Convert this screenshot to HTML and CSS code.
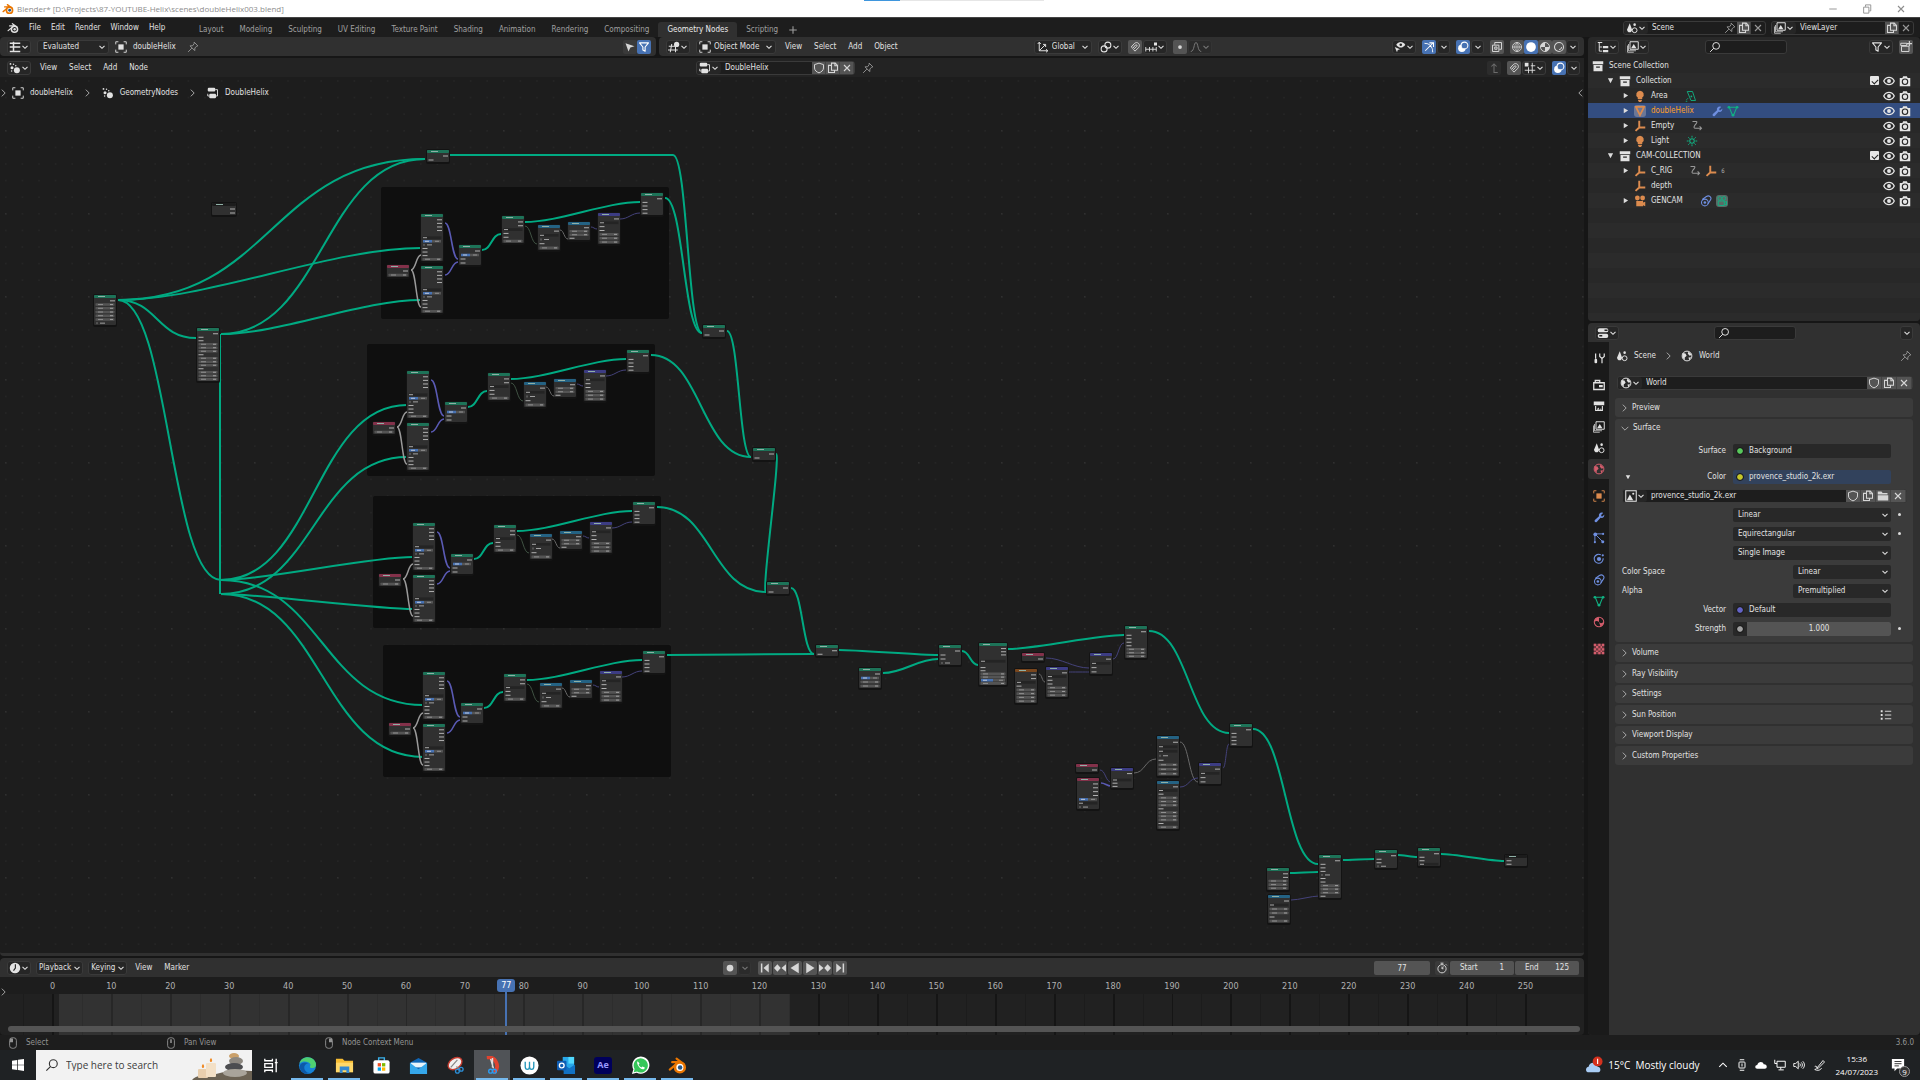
FILE: index.html
```html
<!DOCTYPE html>
<html lang="en">
<head>
    <meta charset="UTF-8">
    <meta name="viewport" content="width=device-width, initial-scale=1.0">
    <title>Blender* [D:\Projects\87-YOUTUBE-Helix\scenes\doubleHelix003.blend]</title>
    <link rel="stylesheet" href="styles.css">
</head>
<body>
    <!-- Icon sprite -->
    <svg class="sprite" aria-hidden="true">
        <symbol id="blender" viewBox="0 0 16 16"><path d="M1.5 11.5 9 5.2H3.5M7.2 2.2l6 4.6" fill="none" stroke="currentColor" stroke-width="1.7" stroke-linecap="round" stroke-linejoin="round"/><circle cx="10" cy="9.6" r="4.1" fill="none" stroke="currentColor" stroke-width="2"/><circle cx="10.2" cy="9.6" r="1.6" fill="currentColor"/></symbol>
        <symbol id="blender-color" viewBox="0 0 16 16"><path d="M1.5 11.5 9 5.2H3.5M7.2 2.2l6 4.6" fill="none" stroke="#ea7600" stroke-width="1.8" stroke-linecap="round" stroke-linejoin="round"/><circle cx="10" cy="9.6" r="4.1" fill="#fff" stroke="#ea7600" stroke-width="2.2"/><circle cx="10.2" cy="9.6" r="1.9" fill="#265787"/></symbol>
        <symbol id="chev" viewBox="0 0 8 8"><path d="M1.5 2.8 4 5.3l2.5-2.5" fill="none" stroke="currentColor" stroke-width="1.1"/></symbol>
        <symbol id="right" viewBox="0 0 8 12"><path d="M2 2l4 4-4 4" fill="none" stroke="currentColor" stroke-width="1.1"/></symbol>
        <symbol id="left" viewBox="0 0 8 12"><path d="M6 2 2 6l4 4" fill="none" stroke="currentColor" stroke-width="1.1"/></symbol>
        <symbol id="down" viewBox="0 0 12 8"><path d="M2 2l4 4 4-4" fill="none" stroke="currentColor" stroke-width="1.1"/></symbol>
        <symbol id="tri-right" viewBox="0 0 8 8"><path d="M2 1v6l5-3z" fill="currentColor"/></symbol>
        <symbol id="tri-down" viewBox="0 0 8 8"><path d="M1 1.5h6L4 7z" fill="currentColor"/></symbol>
        <symbol id="x" viewBox="0 0 16 16"><path d="M4 4l8 8M12 4l-8 8" stroke="currentColor" stroke-width="1.5"/></symbol>
        <symbol id="plus" viewBox="0 0 16 16"><path d="M8 3v10M3 8h10" stroke="currentColor" stroke-width="1.4"/></symbol>
        <symbol id="minus" viewBox="0 0 16 16"><path d="M3 8h10" stroke="currentColor" stroke-width="1.2"/></symbol>
        <symbol id="restore" viewBox="0 0 16 16"><path d="M3.5 5.5h7v8h-7zM6 5V2.500h7v8h-2" fill="none" stroke="currentColor" stroke-width="1.2"/></symbol>
        <symbol id="sheet" viewBox="0 0 16 16"><path d="M1 3h14M1 8h14M1 14h14M6 1v13" fill="none" stroke="currentColor" stroke-width="2"/></symbol>
        <symbol id="geo" viewBox="0 0 16 16"><g fill="currentColor"><circle cx="10.500" cy="11" r="4"/><circle cx="4" cy="7.500" r="2"/><circle cx="2" cy="2.500" r="1.200"/><circle cx="6" cy="3" r="1"/><circle cx="9" cy="5" r="1"/><circle cx="3.500" cy="12" r="1"/></g></symbol>
        <symbol id="object" viewBox="0 0 16 16"><rect x="4.500" y="4.500" width="7" height="7" fill="currentColor"/><path d="M1 4.500V1h3.500M11.500 1H15v3.500M15 11.500V15h-3.500M4.500 15H1v-3.500" fill="none" stroke="currentColor" stroke-width="1.200"/></symbol>
        <symbol id="pin" viewBox="0 0 16 16"><path d="M9.500 1.500l5 5-1.600.4-2.400 2.400-.2 3.500L4 6.500l3.500-.2L9.500 3.500zM6.500 9.500l-5 5" fill="none" stroke="currentColor" stroke-width="1.200" stroke-linejoin="round"/></symbol>
        <symbol id="tree" viewBox="0 0 16 16"><rect x="1" y="1" width="10" height="5" rx="1.500" fill="currentColor"/><rect x="3" y="9" width="9" height="6" rx="1.500" fill="currentColor"/><path d="M11 3.500h3V12h-2M3 12H1V9" fill="none" stroke="currentColor" stroke-width="1.200"/></symbol>
        <symbol id="arrow" viewBox="0 0 16 16"><path d="M2 3l12 4-5.500 1.500L6 14z" fill="currentColor"/></symbol>
        <symbol id="funnel" viewBox="0 0 16 16"><path d="M2 2.500h12L9.500 8v5.500L6.500 12V8z" fill="none" stroke="currentColor" stroke-width="1.500" stroke-linejoin="round"/></symbol>
        <symbol id="view3d" viewBox="0 0 16 16"><path d="M1 7h9M0 12h13M5 4 3 15M10 8v7" fill="none" stroke="currentColor" stroke-width="1.400"/><circle cx="11.500" cy="4.500" r="3.500" fill="currentColor"/></symbol>
        <symbol id="axes" viewBox="0 0 16 16"><path d="M3 2v11h11M3 13l8-8M1 4l2-2.500L5 4M12 11l2.500 2L12 15M8 4.500h3.500V8" fill="none" stroke="currentColor" stroke-width="1.300"/></symbol>
        <symbol id="link" viewBox="0 0 16 16"><circle cx="5.500" cy="10.500" r="4" fill="none" stroke="currentColor" stroke-width="1.400"/><circle cx="10.500" cy="5.500" r="4" fill="none" stroke="currentColor" stroke-width="1.400"/><circle cx="8" cy="8" r="1.300" fill="currentColor"/></symbol>
        <symbol id="magnet" viewBox="0 0 16 16"><path d="M3 8l4-4.500c4-4 9.500 1.500 5.500 5.500L8 13.500 6 11.500l4.300-4.300c1.200-1.400-.5-3-1.800-1.800L5 9.800z" fill="none" stroke="currentColor" stroke-width="1.300"/></symbol>
        <symbol id="increment" viewBox="0 0 16 16"><path d="M1 8v6M15 8v6M1 11h14M6 8v6M10.500 8v6" fill="none" stroke="currentColor" stroke-width="1.200"/><rect x="12" y="2" width="4" height="4" fill="currentColor"/></symbol>
        <symbol id="snapgrid" viewBox="0 0 16 16"><path d="M1 11h14M9 5h6M6 7v8M11 1v14" fill="none" stroke="currentColor" stroke-width="1.200"/><rect x="1" y="1" width="5" height="5" fill="currentColor"/></symbol>
        <symbol id="dot" viewBox="0 0 16 16"><circle cx="8" cy="8" r="2.500" fill="currentColor"/></symbol>
        <symbol id="falloff" viewBox="0 0 16 16"><path d="M1 14C6 14 5 2 8 2s2 12 7 12" fill="none" stroke="currentColor" stroke-width="1.300"/></symbol>
        <symbol id="eyecursor" viewBox="0 0 16 16"><path d="M3 5c3-5 9-5 12 0-3 5-9 5-12 0z" fill="currentColor"/><circle cx="9" cy="5" r="1.700" fill="#222"/><path d="M1 8l7 3-3 1-1 3z" fill="currentColor"/></symbol>
        <symbol id="gizmo" viewBox="0 0 16 16"><path d="M2 3c7 0 11 5 11 12M3 13 13 3M8.500 2.500H14V8" fill="none" stroke="currentColor" stroke-width="1.400"/></symbol>
        <symbol id="overlay" viewBox="0 0 16 16"><circle cx="6.500" cy="9.500" r="5" fill="currentColor"/><circle cx="10" cy="6" r="4.500" fill="#4772b3" stroke="currentColor" stroke-width="1.400"/></symbol>
        <symbol id="xray" viewBox="0 0 16 16"><path d="M2 5.500h8.500V14H2zM5 5V2h9v9h-3M5 8h3v3H5z" fill="none" stroke="currentColor" stroke-width="1.300"/></symbol>
        <symbol id="wire" viewBox="0 0 16 16"><circle cx="8" cy="8" r="6" fill="none" stroke="currentColor" stroke-width="1.200"/><path d="M2 8h12M8 2v12M8 2C4 5 4 11 8 14M8 2c4 3 4 9 0 12" fill="none" stroke="currentColor"/></symbol>
        <symbol id="solid" viewBox="0 0 16 16"><circle cx="8" cy="8" r="6.500" fill="currentColor"/></symbol>
        <symbol id="matprev" viewBox="0 0 16 16"><circle cx="8" cy="8" r="6" fill="none" stroke="currentColor" stroke-width="1.300"/><path d="M8 2v6H2a6 6 0 0 1 6-6zM8 8h6a6 6 0 0 1-6 6z" fill="currentColor"/></symbol>
        <symbol id="rendered" viewBox="0 0 16 16"><circle cx="8" cy="8" r="6" fill="none" stroke="currentColor" stroke-width="1.400"/><path d="M8 11.500A3.500 3.500 0 0 0 11.500 8" fill="none" stroke="currentColor" stroke-width="1.200"/></symbol>
        <symbol id="shield" viewBox="0 0 16 16"><path d="M8 1.500 14 3.500V8c0 3-3 5.500-6 6.500C5 13.500 2 11 2 8V3.500z" fill="none" stroke="currentColor" stroke-width="1.300"/></symbol>
        <symbol id="copy" viewBox="0 0 16 16"><path d="M6 1.500h5L14 4.500V11H6zM10.500 1.500V5H14M5.500 4.500H2v9.500h8v-2.500" fill="none" stroke="currentColor" stroke-width="1.400"/></symbol>
        <symbol id="folder" viewBox="0 0 16 16"><path d="M1 2h5l1.500 2H14v2H1zM1 7h14v7H1z" fill="currentColor"/></symbol>
        <symbol id="image" viewBox="0 0 16 16"><rect x="1" y="1" width="14" height="14" fill="none" stroke="currentColor" stroke-width="1.400"/><path d="M2.500 13.500 6.500 6l4.500 7.500z" fill="currentColor"/><circle cx="11" cy="5" r="1.400" fill="currentColor"/></symbol>
        <symbol id="layers" viewBox="0 0 16 16"><path d="M4 1h11v10H4z" fill="none" stroke="currentColor" stroke-width="1.300"/><path d="M5.500 9.500 9 4l3.500 5.500z" fill="currentColor"/><path d="M2 4v9h10M.7 6v9H9" fill="none" stroke="currentColor"/></symbol>
        <symbol id="scene" viewBox="0 0 16 16"><path d="M5 1.500 8 10c.5 5-7 5-6.500 0z" fill="currentColor"/><circle cx="11.500" cy="11" r="3.200" fill="none" stroke="currentColor" stroke-width="1.300"/><circle cx="11.500" cy="3.500" r="1.700" fill="currentColor"/></symbol>
        <symbol id="outliner" viewBox="0 0 16 16"><path d="M1 2h6M3 2v11.500h4M3 8h4" fill="none" stroke="currentColor" stroke-width="1.300"/><path d="M8 6.500h7v3H8zM8 12h7v3H8z" fill="currentColor"/></symbol>
        <symbol id="search" viewBox="0 0 16 16"><circle cx="9.500" cy="6.500" r="4.500" fill="none" stroke="currentColor" stroke-width="1.300"/><path d="M6.500 9.500 1.500 14.500" stroke="currentColor" stroke-width="1.300"/></symbol>
        <symbol id="newcol" viewBox="0 0 16 16"><path d="M1 3h8v3H1zM2 7h10v7H2z" fill="none" stroke="currentColor" stroke-width="1.300"/><path d="M12.500 0v7M9 3.500h7" stroke="currentColor" stroke-width="1.500"/></symbol>
        <symbol id="collection" viewBox="0 0 16 16"><path d="M1 1.500h14v4H1zM2 6.500h12V15H2z" fill="currentColor"/><path d="M5.500 9.500h5" stroke="#282828" stroke-width="1.600"/></symbol>
        <symbol id="bulb" viewBox="0 0 16 16"><path d="M8 1a5 5 0 0 0-3 9v2h6v-2a5 5 0 0 0-3-9zM5.500 13h5v1.500l-1.500 1.500H7l-1.500-1.500z" fill="currentColor"/></symbol>
        <symbol id="area" viewBox="0 0 16 16"><path d="M3 2h7l4 12H8zM2 13l2-2M1 15h2" fill="none" stroke="currentColor" stroke-width="1.200"/><circle cx="8.500" cy="8.500" r="1.200" fill="currentColor"/></symbol>
        <symbol id="mesh" viewBox="0 0 16 16"><path d="M3 3h10L9 13H7z" fill="none" stroke="currentColor" stroke-width="1.400"/><circle cx="2.500" cy="3" r="1.800" fill="currentColor"/><circle cx="13.500" cy="3" r="1.800" fill="currentColor"/><circle cx="8" cy="13.500" r="1.800" fill="currentColor"/></symbol>
        <symbol id="meshobj" viewBox="0 0 16 16"><path d="M2.500 2.500h11L8 13.500z" fill="none" stroke="currentColor" stroke-width="2.400"/></symbol>
        <symbol id="wrench" viewBox="0 0 16 16"><path d="M13.500 2.500l-2.500 2.500v2h2l2-2.500c.7 3-2 5.500-5 4.500l-5 5.500c-1.500 1.500-4-.5-2.500-2.500l5.500-5c-1-3 2-6 5.500-4.500z" fill="currentColor"/></symbol>
        <symbol id="empty" viewBox="0 0 16 16"><path d="M7 1v9h8M7 10l-5 4.500" fill="none" stroke="currentColor" stroke-width="2.600"/></symbol>
        <symbol id="anim" viewBox="0 0 16 16"><path d="M2 2h5c2 0 0 3-1.500 4.500C3 10 4 11 6 11h8M11.500 8.500 14 11l-2.500 2.500" fill="none" stroke="currentColor" stroke-width="1.400"/></symbol>
        <symbol id="sun" viewBox="0 0 16 16"><circle cx="8" cy="8" r="3" fill="none" stroke="currentColor" stroke-width="1.400"/><path d="M8 1v2.500M8 12.500V15M1 8h2.500M12.500 8H15M3 3l1.800 1.800M11.200 11.200 13 13M13 3l-1.800 1.800M4.800 11.200 3 13" stroke="currentColor" stroke-width="1.300"/></symbol>
        <symbol id="camera" viewBox="0 0 16 16"><circle cx="4.500" cy="4" r="3.200" fill="currentColor"/><circle cx="11.500" cy="4" r="3.200" fill="currentColor"/><path d="M3 8h9v2l3-1v6l-3-1.500V15H3z" fill="currentColor"/></symbol>
        <symbol id="constraint" viewBox="0 0 16 16"><circle cx="6.500" cy="10" r="4.500" fill="none" stroke="currentColor" stroke-width="1.400"/><circle cx="6.500" cy="10" r="1.700" fill="currentColor"/><path d="M3 6 8.500 2c4-2.500 7.500 1.500 5.500 4.500L10.500 12" fill="none" stroke="currentColor" stroke-width="1.400"/></symbol>
        <symbol id="camdata" viewBox="0 0 16 16"><path d="M3 8h8v6H3zM11 10l3-1.500v5L11 12" fill="none" stroke="currentColor" stroke-width="1.200"/><circle cx="5" cy="4.500" r="2.500" fill="none" stroke="currentColor" stroke-width="1.200"/><circle cx="10.500" cy="4.500" r="2.500" fill="none" stroke="currentColor" stroke-width="1.200"/></symbol>
        <symbol id="eye" viewBox="0 0 16 16"><path d="M1 8c3-6.500 11-6.500 14 0-3 6.500-11 6.500-14 0z" fill="none" stroke="currentColor" stroke-width="1.700"/><circle cx="8" cy="8" r="2.600" fill="currentColor"/></symbol>
        <symbol id="photo" viewBox="0 0 16 16"><path d="M1 4h3.500l1-2.500h5l1 2.500H15v11H1z" fill="currentColor"/><circle cx="8" cy="9" r="3.600" fill="none" stroke="#282828" stroke-width="1.500"/></symbol>
        <symbol id="props" viewBox="0 0 16 16"><rect x="1" y="1.500" width="14" height="5.500" rx="2.500" fill="currentColor"/><rect x="1" y="9" width="14" height="5.500" rx="2.500" fill="currentColor"/><path d="M10 4.200h4M3 11.800h4" stroke="#222" stroke-width="2"/></symbol>
        <symbol id="tool" viewBox="0 0 16 16"><path d="M3.500 2v7M12 9v6" stroke="currentColor" stroke-width="1.600"/><rect x="2" y="9" width="3.500" height="6" rx="1.500" fill="currentColor"/><path d="M9 2v4l3 2.500L15 6V2" fill="none" stroke="currentColor" stroke-width="1.600"/></symbol>
        <symbol id="render" viewBox="0 0 16 16"><path d="M1 5h14v9H1zM3 4.500V2h6v2.500" fill="none" stroke="currentColor" stroke-width="1.700"/><path d="M8 9.500h5" stroke="currentColor" stroke-width="3"/></symbol>
        <symbol id="output" viewBox="0 0 16 16"><path d="M1 2h14v5H1z" fill="currentColor"/><path d="M3.500 8v6h9V8" fill="none" stroke="currentColor" stroke-width="1.500"/><path d="M5 13l2-3 2 3 1.500-2 1 2z" fill="currentColor"/></symbol>
        <symbol id="world" viewBox="0 0 16 16"><circle cx="8" cy="8" r="6.500" fill="none" stroke="currentColor" stroke-width="1.300"/><path d="M2 4l4 .5 1.500 3L5 10v3.500L2 10zM10 2l4 3.500-2 2.500-3-3zM10 10l3.500-.5L11 14z" fill="currentColor"/></symbol>
        <symbol id="particles" viewBox="0 0 16 16"><path d="M3 3l10 10M4 2.500h9M2.500 4v9" stroke="currentColor" stroke-width="1.200"/><circle cx="3" cy="3" r="2.500" fill="currentColor"/><circle cx="13.500" cy="2.500" r="1.400" fill="currentColor"/><circle cx="13" cy="13" r="2" fill="currentColor"/><circle cx="2.500" cy="13.500" r="1.400" fill="currentColor"/></symbol>
        <symbol id="physics" viewBox="0 0 16 16"><path d="M10.500 2.500A6 6 0 1 0 13.500 7" fill="none" stroke="currentColor" stroke-width="1.500"/><circle cx="8" cy="8" r="2.800" fill="currentColor"/><circle cx="13" cy="3" r="1.500" fill="currentColor"/></symbol>
        <symbol id="material" viewBox="0 0 16 16"><circle cx="8" cy="8" r="6.300" fill="none" stroke="currentColor" stroke-width="1.400"/><path d="M8 8V1.700A6.300 6.300 0 0 0 2 8c2-2 4-1.500 6 0zM8 8c1.500 2 4 2 6 0a6.300 6.300 0 0 1-4 6z" fill="currentColor"/></symbol>
        <symbol id="texture" viewBox="0 0 16 16"><path d="M1 1h14v14H1z" fill="currentColor" opacity=".45"/><path d="M1 1h3v3H1zM7 1h3v3H7zM12 1h3v3h-3zM4 4h3v3H4zM10 4h2v3h-2zM1 7h3v3H1zM7 7h3v3H7zM12 7h3v3h-3zM4 10h3v2H4zM10 10h2v2h-2zM1 12h3v3H1zM7 12h3v3H7zM12 12h3v3h-3z" fill="currentColor"/></symbol>
        <symbol id="presets" viewBox="0 0 16 16"><path d="M1 3h2.500M1 8h2.500M1 13h2.500" stroke="currentColor" stroke-width="2.500"/><path d="M6.500 3H15M6.500 8H15M6.500 13H15" stroke="currentColor" stroke-width="1.200"/></symbol>
        <symbol id="clock" viewBox="0 0 16 16"><circle cx="8" cy="8" r="7" fill="currentColor"/><path d="M8.500 3v5l-2.500 3.500" fill="none" stroke="#222" stroke-width="1.500"/></symbol>
        <symbol id="stopwatch" viewBox="0 0 16 16"><circle cx="8" cy="9" r="5.500" fill="none" stroke="currentColor" stroke-width="1.300"/><path d="M8 9 10 6M6 1.500h4M8 1.500v2M13 3l1.500 1.500M8 6v3h2" fill="none" stroke="currentColor" stroke-width="1.200"/></symbol>
        <symbol id="record" viewBox="0 0 16 16"><circle cx="8" cy="8" r="4.500" fill="currentColor"/></symbol>
        <symbol id="first" viewBox="0 0 16 16"><path d="M2.500 2h2v12h-2zM13 2v12L6 8z" fill="currentColor"/></symbol>
        <symbol id="prevkey" viewBox="0 0 16 16"><path d="M0 8l4.500-5L9 8l-4.500 5zM16 3v10l-6-5z" fill="currentColor"/></symbol>
        <symbol id="playback" viewBox="0 0 16 16"><path d="M13 1v14L2 8z" fill="currentColor"/></symbol>
        <symbol id="play" viewBox="0 0 16 16"><path d="M3 1v14l11-7z" fill="currentColor"/></symbol>
        <symbol id="nextkey" viewBox="0 0 16 16"><path d="M16 8l-4.500-5L7 8l4.500 5zM0 3v10l6-5z" fill="currentColor"/></symbol>
        <symbol id="last" viewBox="0 0 16 16"><path d="M13.500 2h-2v12h2zM3 2v12l7-6z" fill="currentColor"/></symbol>
        <symbol id="up" viewBox="0 0 16 16"><path d="M13 14H8V3M4.500 6 8 2.500 11.500 6" fill="none" stroke="currentColor" stroke-width="1.400"/></symbol>
        <symbol id="mouse-l" viewBox="0 0 16 16"><rect x="3.500" y="1" width="9" height="14" rx="3.500" fill="none" stroke="currentColor" stroke-width="1.200"/><path d="M4 2h4v5H4z" fill="currentColor"/></symbol>
        <symbol id="mouse-m" viewBox="0 0 16 16"><rect x="3.500" y="1" width="9" height="14" rx="3.500" fill="none" stroke="currentColor" stroke-width="1.200"/><path d="M7 3h2v5H7z" fill="currentColor"/></symbol>
        <symbol id="mouse-r" viewBox="0 0 16 16"><rect x="3.500" y="1" width="9" height="14" rx="3.500" fill="none" stroke="currentColor" stroke-width="1.200"/><path d="M8 2h4v5H8z" fill="currentColor"/></symbol>
    </svg>

    <div class="titlebar">
        <svg class="icon"><use href="#blender-color"/></svg>
        <span class="title">Blender* [D:\Projects\87-YOUTUBE-Helix\scenes\doubleHelix003.blend]</span>
        <span class="share-progress"></span>
        <div class="window-buttons">
            <button aria-label="Minimize"><svg class="icon"><use href="#minus"/></svg></button>
            <button aria-label="Restore"><svg class="icon"><use href="#restore"/></svg></button>
            <button aria-label="Close"><svg class="icon"><use href="#x"/></svg></button>
        </div>
    </div>

    <header class="topbar">
        <nav class="menus">
            <button aria-label="Blender"><svg class="icon"><use href="#blender"/></svg></button>
            <button>File</button><button>Edit</button><button>Render</button><button>Window</button><button>Help</button>
        </nav>
        <nav class="workspaces">
            <button>Layout</button><button>Modeling</button><button>Sculpting</button><button>UV Editing</button><button>Texture Paint</button><button>Shading</button><button>Animation</button><button>Rendering</button><button>Compositing</button><button class="active">Geometry Nodes</button><button>Scripting</button><button class="add" aria-label="Add workspace"><svg class="icon"><use href="#plus"/></svg></button>
        </nav>
        <div class="datablock scene-block">
            <button class="drop" aria-label="Browse scene"><svg class="icon"><use href="#scene"/></svg><svg class="chev"><use href="#chev"/></svg></button>
            <input type="text" value="Scene" aria-label="Scene name">
            <button class="flat dim" aria-label="Pin scene"><svg class="icon"><use href="#pin"/></svg></button>
            <button class="tile" aria-label="New scene"><svg class="icon"><use href="#copy"/></svg></button>
            <button class="flat dim" aria-label="Delete scene"><svg class="icon"><use href="#x"/></svg></button>
        </div>
        <div class="datablock scene-block">
            <button class="drop" aria-label="Browse view layer"><svg class="icon"><use href="#layers"/></svg><svg class="chev"><use href="#chev"/></svg></button>
            <input type="text" value="ViewLayer" aria-label="View layer name">
            <button class="tile" aria-label="New view layer"><svg class="icon"><use href="#copy"/></svg></button>
            <button class="flat dim" aria-label="Delete view layer"><svg class="icon"><use href="#x"/></svg></button>
        </div>
    </header>

    <main class="workspace">
        <div class="left-side">
            <div class="top-editors">
                <div class="bar sheet-bar">
                    <button class="drop" aria-label="Editor type: Spreadsheet"><svg class="icon"><use href="#sheet"/></svg><svg class="chev"><use href="#chev"/></svg></button>
                    <span class="select eval"><select aria-label="Object evaluation state"><option>Evaluated</option></select><svg class="chev"><use href="#chev"/></svg></span>
                    <span class="crumb"><svg class="icon"><use href="#object"/></svg>doubleHelix</span>
                    <button class="flat dim pin" aria-label="Pin"><svg class="icon"><use href="#pin"/></svg></button>
                    <span class="space"></span>
                    <button class="tile soft" aria-label="Selected only"><svg class="icon"><use href="#arrow"/></svg></button>
                    <button class="tile blue" aria-label="Filter"><svg class="icon"><use href="#funnel"/></svg></button>
                </div>
                <div class="bar view-bar">
                    <button class="drop" aria-label="Editor type: 3D Viewport"><svg class="icon"><use href="#view3d"/></svg><svg class="chev"><use href="#chev"/></svg></button>
                    <span class="select mode"><svg class="icon"><use href="#object"/></svg><select aria-label="Interaction mode"><option>Object Mode</option></select><svg class="chev"><use href="#chev"/></svg></span>
                    <nav class="menus"><button>View</button><button>Select</button><button>Add</button><button>Object</button></nav>
                    <span class="space"></span>
                    <span class="select orient"><svg class="icon"><use href="#axes"/></svg><select aria-label="Transform orientation"><option>Global</option></select><svg class="chev"><use href="#chev"/></svg></span>
                    <button class="drop" aria-label="Pivot point"><svg class="icon"><use href="#link"/></svg><svg class="chev"><use href="#chev"/></svg></button>
                    <span class="joined"><button class="tile" aria-label="Snap"><svg class="icon"><use href="#magnet"/></svg></button><button class="drop" aria-label="Snap to"><svg class="icon"><use href="#increment"/></svg><svg class="chev"><use href="#chev"/></svg></button></span>
                    <span class="joined"><button class="tile" aria-label="Proportional editing"><svg class="icon"><use href="#dot"/></svg></button><button class="drop faded" aria-label="Falloff"><svg class="icon"><use href="#falloff"/></svg><svg class="chev"><use href="#chev"/></svg></button></span>
                    <span class="space wide"></span>
                    <button class="drop" aria-label="Object types visibility"><svg class="icon"><use href="#eyecursor"/></svg><svg class="chev"><use href="#chev"/></svg></button>
                    <span class="joined"><button class="tile blue" aria-label="Gizmos"><svg class="icon"><use href="#gizmo"/></svg></button><button class="drop only" aria-label="Gizmo options"><svg class="chev"><use href="#chev"/></svg></button></span>
                    <span class="joined"><button class="tile blue" aria-label="Overlays"><svg class="icon"><use href="#overlay"/></svg></button><button class="drop only" aria-label="Overlay options"><svg class="chev"><use href="#chev"/></svg></button></span>
                    <button class="tile" aria-label="X-Ray"><svg class="icon"><use href="#xray"/></svg></button>
                    <span class="joined tight"><button class="tile" aria-label="Wireframe"><svg class="icon"><use href="#wire"/></svg></button><button class="tile blue" aria-label="Solid"><svg class="icon"><use href="#solid"/></svg></button><button class="tile" aria-label="Material preview"><svg class="icon"><use href="#matprev"/></svg></button><button class="tile" aria-label="Rendered"><svg class="icon"><use href="#rendered"/></svg></button><button class="drop only" aria-label="Shading options"><svg class="chev"><use href="#chev"/></svg></button></span>
                </div>
            </div>

            <section class="node-editor">
                <div class="node-bar">
                    <div class="node-left">
                        <button class="drop" aria-label="Editor type: Geometry Nodes"><svg class="icon"><use href="#geo"/></svg><svg class="chev"><use href="#chev"/></svg></button>
                        <nav class="menus"><button>View</button><button>Select</button><button>Add</button><button>Node</button></nav>
                    </div>
                    <div class="node-mid">
                        <div class="datablock">
                            <button class="drop" aria-label="Browse node tree"><svg class="icon"><use href="#tree"/></svg><svg class="chev"><use href="#chev"/></svg></button>
                            <input type="text" value="DoubleHelix" aria-label="Node tree name">
                            <button class="tile" aria-label="Fake user"><svg class="icon"><use href="#shield"/></svg></button>
                            <button class="tile" aria-label="New node tree"><svg class="icon"><use href="#copy"/></svg></button>
                            <button class="tile" aria-label="Unlink"><svg class="icon"><use href="#x"/></svg></button>
                        </div>
                        <button class="flat dim" aria-label="Pin"><svg class="icon"><use href="#pin"/></svg></button>
                    </div>
                    <div class="node-right">
                        <button class="tile soft faded" aria-label="Parent node tree"><svg class="icon"><use href="#up"/></svg></button>
                        <span class="joined"><button class="tile" aria-label="Snap"><svg class="icon"><use href="#magnet"/></svg></button><button class="drop" aria-label="Snap to grid"><svg class="icon"><use href="#snapgrid"/></svg><svg class="chev"><use href="#chev"/></svg></button></span>
                        <span class="joined"><button class="tile blue" aria-label="Overlays"><svg class="icon"><use href="#overlay"/></svg></button><button class="drop only" aria-label="Overlay options"><svg class="chev"><use href="#chev"/></svg></button></span>
                    </div>
                </div>
                <div class="canvas">
                    <svg id="node-canvas" role="img" aria-label="DoubleHelix node tree"></svg>
                    <div class="path">
                        <svg class="arrow"><use href="#right"/></svg>
                        <span class="crumb"><svg class="icon"><use href="#object"/></svg>doubleHelix</span>
                        <svg class="arrow"><use href="#right"/></svg>
                        <span class="crumb"><svg class="icon"><use href="#geo"/></svg>GeometryNodes</span>
                        <svg class="arrow"><use href="#right"/></svg>
                        <span class="crumb"><svg class="icon"><use href="#tree"/></svg>DoubleHelix</span>
                        <svg class="arrow end"><use href="#left"/></svg>
                    </div>
                </div>
            </section>

            <section class="timeline">
                <div class="bar time-bar">
                    <div class="time-left">
                        <button class="drop" aria-label="Editor type: Timeline"><svg class="icon"><use href="#clock"/></svg><svg class="chev"><use href="#chev"/></svg></button>
                        <button class="drop text">Playback<svg class="chev"><use href="#chev"/></svg></button>
                        <button class="drop text">Keying<svg class="chev"><use href="#chev"/></svg></button>
                        <nav class="menus"><button>View</button><button>Marker</button></nav>
                    </div>
                    <div class="time-mid">
                        <span class="joined"><button class="tile" aria-label="Auto keying"><svg class="icon"><use href="#record"/></svg></button><button class="drop only faded" aria-label="Auto keying options"><svg class="chev"><use href="#chev"/></svg></button></span>
                        <span class="joined transport"><button class="tile" aria-label="First frame"><svg class="icon"><use href="#first"/></svg></button><button class="tile" aria-label="Previous keyframe"><svg class="icon"><use href="#prevkey"/></svg></button><button class="tile" aria-label="Play reversed"><svg class="icon"><use href="#playback"/></svg></button><button class="tile" aria-label="Play"><svg class="icon"><use href="#play"/></svg></button><button class="tile" aria-label="Next keyframe"><svg class="icon"><use href="#nextkey"/></svg></button><button class="tile" aria-label="Last frame"><svg class="icon"><use href="#last"/></svg></button></span>
                    </div>
                    <div class="time-right">
                        <input class="number frame" type="text" value="77" aria-label="Current frame">
                        <span class="joined">
                            <button class="tile soft" aria-label="Use preview range"><svg class="icon"><use href="#stopwatch"/></svg></button>
                            <label class="number">Start<input type="text" value="1"></label>
                            <label class="number">End<input type="text" value="125"></label>
                        </span>
                    </div>
                </div>
                <div class="tracks">
                    <div class="ruler" id="ruler"></div>
                    <div class="grid" id="grid"></div>
                    <div class="range"></div>
                    <div class="playhead"><span>77</span></div>
                    <div class="hscroll"></div>
                    <svg class="side-arrow"><use href="#right"/></svg>
                </div>
            </section>
        </div>

        <aside class="right-side">
            <section class="outliner">
                <div class="panel-bar">
                    <button class="drop" aria-label="Editor type: Outliner"><svg class="icon"><use href="#outliner"/></svg><svg class="chev"><use href="#chev"/></svg></button>
                    <button class="drop" aria-label="Display mode"><svg class="icon"><use href="#layers"/></svg><svg class="chev"><use href="#chev"/></svg></button>
                    <label class="search"><svg class="icon"><use href="#search"/></svg><input type="text" aria-label="Search outliner"></label>
                    <button class="drop last" aria-label="Filter"><svg class="icon"><use href="#funnel"/></svg><svg class="chev"><use href="#chev"/></svg></button>
                    <button class="tile" aria-label="New collection"><svg class="icon"><use href="#newcol"/></svg></button>
                </div>
                <ul class="rows" id="outliner-rows"></ul>
            </section>

            <section class="properties">
                <div class="panel-bar">
                    <button class="drop" aria-label="Editor type: Properties"><svg class="icon"><use href="#props"/></svg><svg class="chev"><use href="#chev"/></svg></button>
                    <label class="search"><svg class="icon"><use href="#search"/></svg><input type="text" aria-label="Search properties"></label>
                    <button class="drop only last" aria-label="Options"><svg class="chev"><use href="#chev"/></svg></button>
                </div>
                <div class="props-body">
                    <nav class="tabs">
                        <button aria-label="Tool"><svg class="icon"><use href="#tool"/></svg></button>
                        <button class="group" aria-label="Render"><svg class="icon"><use href="#render"/></svg></button>
                        <button aria-label="Output"><svg class="icon"><use href="#output"/></svg></button>
                        <button aria-label="View Layer"><svg class="icon"><use href="#layers"/></svg></button>
                        <button aria-label="Scene"><svg class="icon"><use href="#scene"/></svg></button>
                        <button class="red active" aria-label="World"><svg class="icon"><use href="#world"/></svg></button>
                        <button class="group orange" aria-label="Object"><svg class="icon"><use href="#object"/></svg></button>
                        <button class="azure" aria-label="Modifiers"><svg class="icon"><use href="#wrench"/></svg></button>
                        <button class="azure" aria-label="Particles"><svg class="icon"><use href="#particles"/></svg></button>
                        <button class="azure" aria-label="Physics"><svg class="icon"><use href="#physics"/></svg></button>
                        <button class="azure" aria-label="Constraints"><svg class="icon"><use href="#constraint"/></svg></button>
                        <button class="green" aria-label="Data"><svg class="icon"><use href="#mesh"/></svg></button>
                        <button class="red" aria-label="Material"><svg class="icon"><use href="#material"/></svg></button>
                        <button class="group red" aria-label="Texture"><svg class="icon"><use href="#texture"/></svg></button>
                    </nav>
                    <div class="props-main">
                        <div class="context">
                            <span class="crumb"><svg class="icon"><use href="#scene"/></svg>Scene</span>
                            <svg class="arrow"><use href="#right"/></svg>
                            <span class="crumb"><svg class="icon"><use href="#world"/></svg>World</span>
                            <button class="flat dim last" aria-label="Pin"><svg class="icon"><use href="#pin"/></svg></button>
                        </div>
                        <div class="datablock world-block">
                            <button class="drop" aria-label="Browse world"><svg class="icon"><use href="#world"/></svg><svg class="chev"><use href="#chev"/></svg></button>
                            <input type="text" value="World" aria-label="World name">
                            <button class="tile" aria-label="Fake user"><svg class="icon"><use href="#shield"/></svg></button>
                            <button class="tile" aria-label="New world"><svg class="icon"><use href="#copy"/></svg></button>
                            <button class="tile" aria-label="Unlink"><svg class="icon"><use href="#x"/></svg></button>
                        </div>

                        <div class="panels">
                            <div class="panel"><button class="panel-head"><svg class="arrow"><use href="#right"/></svg>Preview<i class="grip"></i></button></div>
                            <div class="panel open">
                                <button class="panel-head"><svg class="arrow-down"><use href="#down"/></svg>Surface<i class="grip"></i></button>
                                <div class="panel-body">
                                    <div class="prop top-gap"><span class="name">Surface</span><button class="socket-field"><i class="socket lime"></i>Background</button></div>
                                    <div class="prop color-row"><svg class="expander"><use href="#tri-down"/></svg><span class="name">Color</span><button class="socket-field linked"><i class="socket yellow"></i>provence_studio_2k.exr</button></div>
                                    <div class="datablock image-block">
                                        <button class="drop" aria-label="Browse image"><svg class="icon"><use href="#image"/></svg><svg class="chev"><use href="#chev"/></svg></button>
                                        <input type="text" value="provence_studio_2k.exr" aria-label="Image name">
                                        <button class="tile" aria-label="Fake user"><svg class="icon"><use href="#shield"/></svg></button>
                                        <button class="tile" aria-label="New image"><svg class="icon"><use href="#copy"/></svg></button>
                                        <button class="tile" aria-label="Open image"><svg class="icon"><use href="#folder"/></svg></button>
                                        <button class="tile" aria-label="Unlink"><svg class="icon"><use href="#x"/></svg></button>
                                    </div>
                                    <div class="prop animated"><span class="select"><select aria-label="Interpolation"><option>Linear</option></select><svg class="chev"><use href="#chev"/></svg></span></div>
                                    <div class="prop animated"><span class="select"><select aria-label="Projection"><option>Equirectangular</option></select><svg class="chev"><use href="#chev"/></svg></span></div>
                                    <div class="prop"><span class="select"><select aria-label="Source"><option>Single Image</option></select><svg class="chev"><use href="#chev"/></svg></span></div>
                                    <div class="prop narrow"><label for="space">Color Space</label><span class="select"><select id="space"><option>Linear</option></select><svg class="chev"><use href="#chev"/></svg></span></div>
                                    <div class="prop narrow"><label for="alpha">Alpha</label><span class="select"><select id="alpha"><option>Premultiplied</option></select><svg class="chev"><use href="#chev"/></svg></span></div>
                                    <div class="prop"><span class="name">Vector</span><button class="socket-field"><i class="socket violet"></i>Default</button></div>
                                    <div class="prop animated"><label class="name" for="strength">Strength</label><span class="strength"><i class="socket grey"></i><input id="strength" type="text" value="1.000"></span></div>
                                </div>
                            </div>
                            <div class="panel"><button class="panel-head"><svg class="arrow"><use href="#right"/></svg>Volume<i class="grip"></i></button></div>
                            <div class="panel"><button class="panel-head"><svg class="arrow"><use href="#right"/></svg>Ray Visibility<i class="grip"></i></button></div>
                            <div class="panel"><button class="panel-head"><svg class="arrow"><use href="#right"/></svg>Settings<i class="grip"></i></button></div>
                            <div class="panel"><button class="panel-head"><svg class="arrow"><use href="#right"/></svg>Sun Position<svg class="icon presets"><use href="#presets"/></svg><i class="grip"></i></button></div>
                            <div class="panel"><button class="panel-head"><svg class="arrow"><use href="#right"/></svg>Viewport Display<i class="grip"></i></button></div>
                            <div class="panel"><button class="panel-head"><svg class="arrow"><use href="#right"/></svg>Custom Properties<i class="grip"></i></button></div>
                        </div>
                    </div>
                </div>
            </section>
        </aside>
    </main>

    <footer class="statusbar">
        <span><svg class="icon"><use href="#mouse-l"/></svg>Select</span>
        <span><svg class="icon"><use href="#mouse-m"/></svg>Pan View</span>
        <span><svg class="icon"><use href="#mouse-r"/></svg>Node Context Menu</span>
        <span class="version">3.6.0</span>
    </footer>

    <div class="taskbar">
        <button class="start" aria-label="Start"><svg viewBox="0 0 16 16"><path d="M0 2.200 7 1.200v6.400H0zM8 1l8-1v7.600H8zM0 8.400h7v6.400l-7-1zM8 8.400h8V16l-8-1.200z" fill="#fff"/></svg></button>
        <label class="task-search">
            <svg class="glass"><use href="#search"/></svg>
            <input type="text" placeholder="Type here to search" aria-label="Type here to search">
            <svg class="stones" viewBox="0 0 60 30">
                <path d="M0 30c4-5 14-6 24-6 12-4 24-4 36-3v9z" fill="#6b6253"/>
                <rect x="6" y="19" width="10" height="9" rx="1" fill="#e9cfae"/><rect x="14" y="13" width="10" height="14" rx="1" fill="#f3e0c6"/>
                <path d="M11 14c2 2 1 4 0 4s-2-2 0-4zM19 8c2 2 1 4 0 4s-2-2 0-4z" fill="#f08a24"/>
                <ellipse cx="42" cy="6" rx="5" ry="3" fill="#caa06a"/><ellipse cx="44" cy="11" rx="7" ry="4" fill="#8d8880"/><ellipse cx="42" cy="17" rx="9" ry="4" fill="#4c4d50"/><ellipse cx="43" cy="23" rx="12" ry="4" fill="#a9a49a"/>
            </svg>
        </label>
        <div class="apps">
            <button aria-label="Task View"><svg viewBox="0 0 20 20"><path d="M4 3v2h8V3M4 17v-2h8v2M4 8h8v4H4zM16 3v14M14.500 7h3" fill="none" stroke="#fff" stroke-width="1.400"/></svg></button>
            <button class="running" aria-label="Edge"><svg viewBox="0 0 20 20"><circle cx="10" cy="10" r="9" fill="#1683d8"/><path d="M1.500 8C3 2 9 0 14 2c4 2 6 6 4.500 9-1.500 2.500-6 2-6 .5 0-1 1-1.500.5-3C12 6 5 4 1.500 8z" fill="#4fd071"/><path d="M8 9c-3 3-1 8 4 9-6 2.500-11-3-10-8 1-3 6-4 9-2-1.500-.3-2.500.4-3 1z" fill="#0d59a8"/></svg></button>
            <button class="running" aria-label="File Explorer"><svg viewBox="0 0 20 20"><path d="M1 3h7l2 2h9v12H1z" fill="#f7bd33"/><path d="M1 7h18v10H1z" fill="#ffd869"/><path d="M5 11h10v7h-3v-3H8v3H5z" fill="#3489d1"/></svg></button>
            <button aria-label="Store"><svg viewBox="0 0 20 20"><path d="M7 5V2h6v3" fill="none" stroke="#3ab1ec" stroke-width="1.500"/><rect x="1.500" y="4.500" width="17" height="14" rx="2" fill="#fff"/><path d="M6 7.500h3.500V11H6z" fill="#f04f23"/><path d="M10.500 7.500H14V11h-3.500z" fill="#80ba02"/><path d="M6 12h3.500v3.500H6z" fill="#00a3ee"/><path d="M10.500 12H14v3.500h-3.500z" fill="#feb800"/></svg></button>
            <button aria-label="Mail"><svg viewBox="0 0 20 20"><path d="M1 7l9-5 9 5v12H1z" fill="#1066b5"/><path d="M2 7h16v5H2z" fill="#e9f4fb"/><path d="M1 7l9 7 9-7v12H1z" fill="#35a7ea"/></svg></button>
            <button aria-label="Snip"><svg viewBox="0 0 20 20"><ellipse cx="9.500" cy="8" rx="8" ry="5.500" transform="rotate(-35 9.500 8)" fill="#f1f1f1" stroke="#c43d30" stroke-width="1.500"/><path d="M5 12l7-8M11 11l4 4" stroke="#888" stroke-width="1.300"/><circle cx="12" cy="16" r="2" fill="none" stroke="#2d8fd8" stroke-width="1.400"/><circle cx="16" cy="14" r="2" fill="none" stroke="#2d8fd8" stroke-width="1.400"/></svg></button>
            <button class="running current" aria-label="Snipping Tool"><svg viewBox="0 0 20 20"><path d="M4 1.500c10-1 14 10 8 16" fill="none" stroke="#e0432f" stroke-width="4"/><path d="M10 2v10M8 3l3 10" stroke="#ddd" stroke-width="1.500"/><circle cx="8" cy="16" r="2" fill="none" stroke="#2d9bf0" stroke-width="1.500"/><circle cx="12" cy="16" r="2" fill="none" stroke="#2d9bf0" stroke-width="1.500"/></svg></button>
            <button class="running" aria-label="Wacom Center"><svg viewBox="0 0 20 20"><circle cx="10" cy="10" r="9.500" fill="#fff"/><path d="M5.500 6v5c0 4 4.500 4 4.500 0V6v5c0 4 4.500 4 4.500 0V6" fill="none" stroke="#2296ba" stroke-width="1.400"/></svg></button>
            <button class="running" aria-label="Outlook"><svg viewBox="0 0 20 20"><path d="M6 1h12v14H6z" fill="#28a8ea"/><path d="M12 1h6v7h-6z" fill="#50d9ff"/><path d="M7 9l6 4 6-4v10H7z" fill="#1272c4"/><rect y="5" width="10" height="10" rx="1" fill="#0f5db3"/><circle cx="5" cy="10" r="2.500" fill="none" stroke="#fff" stroke-width="1.400"/></svg></button>
            <button class="running" aria-label="After Effects"><span class="ae">Ae</span></button>
            <button class="running" aria-label="WhatsApp"><svg viewBox="0 0 20 20"><path d="M1 19l1.500-5A9 9 0 1 1 6 17.500z" fill="#fff"/><path d="M2.800 17.200l1-3.400a7.500 7.500 0 1 1 2.600 2.600z" fill="#35c759"/><path d="M7 5.500c-2 1.500 2 8.500 5.500 8.500 1.500 0 2-1 2-2L12 11l-1 1c-1 0-2.500-1.500-3-3l1-1z" fill="#fff"/></svg></button>
            <button class="running" aria-label="Blender"><svg><use href="#blender-color"/></svg></button>
        </div>
        <div class="tray">
            <button class="weather"><svg viewBox="0 0 20 20"><path d="M3 18c-3-1-2-6 1-6 1-6 9-6 10 0 4 0 4 6 1 6z" fill="#a9cdf5"/><circle cx="14" cy="6" r="5.500" fill="#d3321f"/><path d="M14 3v6" stroke="#fff" stroke-width="1.300"/></svg>15°C&nbsp; Mostly cloudy</button>
            <button aria-label="Show hidden icons"><svg viewBox="0 0 16 16"><path d="M3 10.500 8 5.500l5 5" fill="none" stroke="#fff" stroke-width="1.400"/></svg></button>
            <button aria-label="Device"><svg viewBox="0 0 16 16"><rect x="4" y="4" width="8" height="8" rx="1" fill="none" stroke="#fff" stroke-width="1.300"/><path d="M5 1h6M5 15h6M8 6v4" stroke="#fff" stroke-width="1.300"/></svg></button>
            <button aria-label="OneDrive"><svg viewBox="0 0 16 16"><path d="M3 13c-4-.5-3-5 0-5 1-5 8-5 8.500-1 5-.5 5.500 6 1.500 6z" fill="#fff"/></svg></button>
            <button aria-label="Network"><svg viewBox="0 0 16 16"><path d="M4 3h11v8H4zM9 11v3M6 14.500h7M1 1v5h3" fill="none" stroke="#fff" stroke-width="1.300"/></svg></button>
            <button aria-label="Volume"><svg viewBox="0 0 16 16"><path d="M1 6h2.500L7 3v10l-3.500-3H1zM9 6c1 1 1 3 0 4M11 4.500c2 2 2 5 0 7M13 3c3 3 3 7 0 10" fill="none" stroke="#fff" stroke-width="1.200"/></svg></button>
            <button class="pen" aria-label="Pen"><svg viewBox="0 0 16 16"><path d="M4 12 12 2l2 2-9 9zM1 10c4-2 3 4 0 4 4 2 8 1 9-2" fill="none" stroke="#fff" stroke-width="1.200"/></svg></button>
            <div class="clock"><span>15:36</span><span>24/07/2023</span></div>
            <button class="notes" aria-label="9 notifications"><svg viewBox="0 0 16 16"><path d="M1 1h14v11H7l-3 3v-3H1z" fill="#fff"/><path d="M4 4h8M4 6.500h8M4 9h5" stroke="#222" stroke-width="1"/></svg><span class="badge">9</span></button>
        </div>
    </div>
    <script src="script.js"></script>
</body>
</html>
```
FILE: styles.css
```css
* {
    box-sizing: border-box;
}
body {
    margin: 0;
    height: 100vh;
    display: flex;
    flex-direction: column;
    overflow: hidden;
    background-color: #161616;
    color: #e2e2e2;
    font-family: "DejaVu Sans Condensed", "Noto Sans", sans-serif;
    font-size: 8px;
    line-height: 12px;
}
button,
input,
select {
    font: inherit;
    color: inherit;
    background: none;
    border: none;
    padding: 0;
    margin: 0;
    min-width: 0;
}
button {
    display: inline-flex;
    align-items: center;
    justify-content: center;
    white-space: nowrap;
}
svg {
    display: block;
    flex: none;
}
.sprite {
    position: absolute;
    width: 0;
    height: 0;
}
.icon {
    width: 12px;
    height: 12px;
}
.chev {
    width: 8px;
    height: 8px;
    pointer-events: none;
}
.arrow {
    width: 7px;
    height: 10px;
    color: #b4b4b4;
}
.arrow-down {
    width: 10px;
    height: 7px;
    color: #b4b4b4;
}
.dim {
    color: #999;
}
.faded {
    opacity: 0.4;
}
.space {
    flex: 1;
}
.last {
    margin-left: auto;
}

/* title bar */
.titlebar {
    height: 17px;
    flex: none;
    display: flex;
    align-items: center;
    padding: 0 13px 0 2px;
    gap: 3px;
    background-color: #fff;
    color: #8d8d8d;
    position: relative;
}
.title {
    font-family: "Open Sans", sans-serif;
    font-size: 8px;
}
.share-progress {
    position: absolute;
    top: 0;
    left: 45%;
    width: 180px;
    height: 1px;
    background: linear-gradient(to right, #3f96dd 20%, #e6e6e6 20%);
}
.window-buttons {
    margin-left: auto;
    display: flex;
    gap: 22px;
}

/* top bar */
.topbar {
    height: 20px;
    flex: none;
    display: flex;
    align-items: center;
    padding: 0 6px 0 7px;
    gap: 5px;
    background-color: #1d1d1d;
    border-top: 1px solid #444;
}
.menus {
    display: flex;
    gap: 12px;
}
.topbar .menus {
    gap: 10px;
    width: 180px;
}
.workspaces {
    display: flex;
    align-self: flex-end;
    height: 15px;
    flex: 1;
    gap: 2px;
}
.workspaces button {
    padding: 0 7px;
    color: #a0a0a0;
    border-radius: 3px 3px 0 0;
}
.workspaces .active {
    padding: 0 9px;
    background-color: #303030;
    color: #ececec;
}
.workspaces .add {
    padding: 0;
}

/* shared controls */
.drop {
    height: 14px;
    padding: 0 1px;
    border: 1px solid #3a3a3a;
    border-radius: 3px;
    background-color: #262626;
}
.drop.text {
    padding: 0 1px 0 2px;
    gap: 2px;
}
.drop.only {
    width: 13px;
}
.tile {
    width: 14px;
    height: 14px;
    border-radius: 2px;
    background-color: #545454;
    color: #d6d6d6;
}
.tile.soft {
    background-color: #3a3a3a;
}
.tile.blue {
    background-color: #4772b3;
    color: #fff;
}
.flat {
    width: 14px;
    height: 14px;
}
.joined {
    display: flex;
    gap: 1px;
}
.select {
    display: flex;
    align-items: center;
    height: 14px;
    padding: 0 2px;
    border: 1px solid #3a3a3a;
    border-radius: 3px;
    background-color: #262626;
}
.select select {
    flex: 1;
    appearance: none;
    padding-left: 3px;
}
.datablock {
    display: flex;
    height: 14px;
    border: 1px solid #3a3a3a;
    border-radius: 3px;
    background-color: #1d1d1d;
}
.datablock > * {
    height: 12px;
}
.datablock .drop {
    border: none;
    width: 24px;
    background-color: #262626;
}
.datablock .tile {
    border-radius: 0;
    border-right: 1px solid #444;
}
.datablock input {
    flex: 1;
    padding-left: 4px;
}
.scene-block {
    width: 143px;
}
.crumb {
    display: flex;
    align-items: center;
    gap: 6px;
}

/* layout */
.workspace {
    flex: 1;
    min-height: 0;
    display: grid;
    grid-template-columns: minmax(0, 1fr) 332px;
    gap: 4px;
}
.left-side {
    display: flex;
    flex-direction: column;
    gap: 2px;
    min-height: 0;
}
.right-side {
    display: flex;
    flex-direction: column;
    gap: 2px;
    min-height: 0;
}
.top-editors {
    display: grid;
    grid-template-columns: 656px minmax(0, 1fr);
    gap: 3px;
}
.bar {
    height: 19px;
    display: flex;
    align-items: center;
    padding: 1px 5px 0 7px;
    gap: 6px;
    background-color: #303030;
    border-radius: 4px;
}
.sheet-bar {
    gap: 0;
}
.eval {
    width: 72px;
    margin: 0 6px;
}
.pin {
    margin-left: 10px;
}
.view-bar .menus {
    padding-left: 3px;
}
.mode {
    width: 80px;
}
.orient {
    width: 58px;
}
.view-bar .wide {
    flex: 1 0 44px;
}
.view-bar .tight {
    gap: 0;
}

/* node editor */
.node-editor {
    flex: 1;
    min-height: 0;
    display: flex;
    flex-direction: column;
    background-color: #1d1d1d;
    border-radius: 4px;
}
.node-bar {
    height: 19px;
    flex: none;
    display: grid;
    grid-template-columns: 1fr auto 1fr;
    align-items: center;
    padding: 0 4px 0 7px;
    background-color: #232323;
}
.node-left,
.node-mid,
.node-right {
    display: flex;
    align-items: center;
    gap: 6px;
}
.node-left {
    gap: 9px;
}
.node-mid {
    padding-right: 16px;
}
.node-mid .datablock {
    width: 159px;
}
.node-right {
    justify-content: flex-end;
}
.canvas {
    flex: 1;
    min-height: 0;
    position: relative;
    border-bottom: 3px solid #303030;
    border-radius: 4px;
}
#node-canvas {
    position: absolute;
    top: 0;
    left: 0;
    width: 100%;
    height: 100%;
}
.path {
    position: relative;
    display: flex;
    align-items: center;
    gap: 11px;
    padding-top: 10px;
}
.path .arrow:first-child {
    margin-right: -6px;
}
.path .end {
    margin-left: auto;
}

/* timeline */
.timeline {
    height: 77px;
    flex: none;
    display: flex;
    flex-direction: column;
    background-color: #1d1d1d;
    border-radius: 4px;
    overflow: hidden;
}
.time-bar {
    display: grid;
    grid-template-columns: 1fr auto 1fr;
    border-radius: 4px 4px 0 0;
}
.time-left,
.time-mid,
.time-right {
    display: flex;
    align-items: center;
    gap: 5px;
}
.time-left .menus {
    padding-left: 3px;
}
.time-mid {
    gap: 7px;
    padding-right: 16px;
}
.time-right {
    justify-content: flex-end;
}
.number {
    display: flex;
    align-items: center;
    justify-content: space-between;
    width: 64px;
    height: 14px;
    padding: 0 10px;
    background-color: #545454;
    border-radius: 2px;
}
.number input {
    width: 24px;
    text-align: right;
}
.frame {
    width: 56px;
    text-align: center;
}
.tracks {
    flex: 1;
    position: relative;
    display: flex;
    flex-direction: column;
    color: #b0b0b0;
}
.ruler,
.grid {
    display: grid;
    grid-template-columns: repeat(26, 1fr);
    padding: 0 29px 0 23px;
}
.ruler {
    height: 17px;
    align-items: center;
    text-align: center;
    font-size: 9px;
}
.grid {
    flex: 1;
    background-color: #212121;
}
.grid span {
    background: linear-gradient(to right, transparent 49%, #151515 49%, #151515 51%, transparent 51%);
    border-left: 1px solid #1c1c1c;
}
.range {
    position: absolute;
    left: 3.7%;
    right: 50.1%;
    top: 17px;
    bottom: 0;
    background-color: rgba(255, 255, 255, 0.08);
}
.playhead {
    position: absolute;
    left: 31.4%;
    top: 2px;
    bottom: 0;
    width: 18px;
    background: linear-gradient(to right, transparent 8px, #4772b3 8px, #4772b3 10px, transparent 10px);
}
.playhead span {
    display: block;
    height: 13px;
    line-height: 13px;
    border-radius: 3px;
    background-color: #4772b3;
    color: #fff;
    font-size: 9px;
    text-align: center;
}
.hscroll {
    position: absolute;
    left: 8px;
    right: 4px;
    bottom: 3px;
    height: 6px;
    border-radius: 3px;
    background-color: #545454;
}
.side-arrow {
    position: absolute;
    left: 0;
    top: 10px;
    width: 7px;
    height: 10px;
}

/* outliner */
.outliner {
    height: 284px;
    flex: none;
    background-color: #282828;
    border-radius: 4px;
    overflow: hidden;
}
.panel-bar {
    height: 19px;
    display: flex;
    align-items: center;
    gap: 6px;
    padding: 1px 7px 0;
    position: relative;
}
.search {
    position: absolute;
    left: 50%;
    top: 3px;
    display: flex;
    align-items: center;
    width: 82px;
    height: 14px;
    margin-left: -49px;
    padding-left: 3px;
    border: 1px solid #3a3a3a;
    border-radius: 3px;
    background-color: #1d1d1d;
}
.properties .search {
    margin-left: -40px;
}
.search input {
    width: 60px;
}
.rows {
    list-style: none;
    margin: 0;
    padding: 2px 0 0;
}
.row {
    display: flex;
    align-items: center;
    gap: 5px;
    height: 15px;
    padding-right: 9px;
}
.row:nth-child(even) {
    background-color: #2b2b2b;
}
.row .tri {
    width: 7px;
    height: 7px;
}
.row .tri.wide {
    margin-right: 1px;
}
.row.selected {
    background-color: #334d80;
    color: #ffa028;
}
.row .tri {
    color: #dcdcdc;
}
.row.level-0 {
    padding-left: 4px;
}
.row.level-1 {
    padding-left: 19px;
}
.row.level-2 {
    padding-left: 34px;
}
.row .extras {
    display: flex;
    gap: 4px;
    padding-left: 12px;
}
.row .toggles {
    margin-left: auto;
    display: flex;
    align-items: center;
    gap: 4px;
    color: #e6e6e6;
}
.row .toggles input {
    appearance: none;
    width: 9px;
    height: 9px;
    background-color: #e6e6e6;
    border-radius: 1px;
    display: grid;
    place-items: center;
}
.row .toggles input:checked::before {
    content: "";
    width: 5px;
    height: 3px;
    border-left: 1px solid #222;
    border-bottom: 1px solid #222;
    transform: rotate(-45deg);
}
.obj-icon {
    color: #dc8b4e;
}
.selected .obj-icon {
    background-color: #6c7796;
    border-radius: 3px;
}
.orange {
    color: #dc8b4e;
}
.azure {
    color: #6f8fe0;
}
.green {
    color: #10b283;
}
.red {
    color: #d45d6c;
}
.camdata {
    background-color: #5a6a66;
    border-radius: 3px;
}
.count {
    font-size: 6px;
    color: #b0b0b0;
}

/* properties */
.properties {
    flex: 1;
    min-height: 0;
    display: flex;
    flex-direction: column;
    background-color: #303030;
    border-radius: 4px;
    overflow: hidden;
}
.props-body {
    flex: 1;
    display: flex;
}
.tabs {
    width: 21px;
    display: flex;
    flex-direction: column;
    padding-top: 6px;
    background-color: #1a1a1a;
}
.tabs button {
    height: 20px;
    margin-bottom: 1px;
    border-radius: 3px 0 0 3px;
}
.tabs .group {
    margin-top: 6px;
}
.tabs .active {
    background-color: #303030;
}
.props-main {
    flex: 1;
    padding: 7px 7px 0 6px;
}
.context {
    display: flex;
    align-items: center;
    gap: 9px;
    height: 14px;
    padding-left: 1px;
}
.world-block {
    margin: 13px 0 8px 2px;
}
.world-block .tile,
.image-block .tile {
    width: 15px;
}
.panels {
    display: flex;
    flex-direction: column;
    gap: 2px;
}
.panel {
    background-color: #3b3b3b;
    border-radius: 3px;
}
.panel-head {
    width: 100%;
    height: 18px;
    justify-content: flex-start;
    gap: 3px;
    padding: 1px 4px 0 5px;
}
.panel-head .arrow {
    margin: 0 1px;
}
.grip {
    width: 8px;
    height: 4px;
    margin-left: auto;
    background-image: radial-gradient(#777 40%, transparent 45%);
    background-size: 2px 2px;
}
.presets {
    margin-left: auto;
}
.presets + .grip {
    margin-left: 6px;
}
.panel-body {
    display: flex;
    flex-direction: column;
    gap: 5px;
    padding: 7px 22px 6px 7px;
}
.prop {
    display: grid;
    grid-template-columns: 104px minmax(0, 1fr);
    column-gap: 7px;
    align-items: center;
    height: 14px;
    position: relative;
}
.top-gap {
    margin-bottom: 7px;
}
.name {
    text-align: right;
    grid-column: 1;
}
.prop .select,
.strength,
.socket-field {
    grid-column: 2;
    height: 14px;
    border-radius: 2px;
    border: none;
    background-color: #282828;
}
.narrow {
    grid-template-columns: minmax(0, 1fr) 98px;
}
.prop .expander {
    position: absolute;
    left: 3px;
    width: 6px;
    height: 6px;
}
.socket-field {
    justify-content: flex-start;
    padding-left: 4px;
    gap: 6px;
}
.socket-field.linked {
    background-color: #32425c;
}
.socket {
    width: 6px;
    height: 6px;
    border-radius: 50%;
    outline: 1px solid #1a1a1a;
}
.lime {
    background-color: #58c85c;
}
.yellow {
    background-color: #c7c729;
}
.violet {
    background-color: #6363c7;
}
.grey {
    background-color: #a1a1a1;
}
.animated::after {
    content: "";
    position: absolute;
    right: -10px;
    width: 3px;
    height: 3px;
    border-radius: 50%;
    background-color: #dcdcdc;
}
.image-block {
    margin-right: -16px;
}
.strength {
    display: flex;
    align-items: center;
    padding-left: 4px;
    gap: 4px;
}
.strength input {
    flex: 1;
    height: 14px;
    text-align: center;
    background-color: #545454;
    border-radius: 0 2px 2px 0;
}

/* status bar */
.statusbar {
    height: 15px;
    flex: none;
    display: flex;
    align-items: center;
    padding: 0 6px 0 7px;
    background-color: #1d1d1d;
    color: #949494;
}
.statusbar span {
    width: 158px;
    display: flex;
    align-items: center;
    gap: 7px;
}
.statusbar .version {
    width: auto;
    margin-left: auto;
}

/* windows taskbar */
.taskbar {
    height: 30px;
    flex: none;
    display: flex;
    background-color: #1f2224;
    color: #fff;
    font-family: "Open Sans", sans-serif;
    font-size: 10px;
}
.start {
    width: 36px;
}
.start svg {
    width: 12px;
    height: 12px;
}
.task-search {
    width: 216px;
    display: flex;
    align-items: center;
    background-color: #f2f2f2;
    color: #333;
}
.glass {
    width: 14px;
    height: 14px;
    margin: 0 7px 0 9px;
}
.task-search input {
    flex: 1;
    font-size: 10px;
}
.task-search input::placeholder {
    color: #3c3c3c;
    opacity: 1;
}
.stones {
    width: 60px;
    height: 30px;
}
.apps {
    display: flex;
    gap: 1px;
}
.apps button {
    width: 36px;
    border-bottom: 2px solid transparent;
    padding-top: 2px;
}
.apps svg {
    width: 19px;
    height: 19px;
}
.apps .running {
    border-image: linear-gradient(to right, transparent 10%, #76b9ed 10%, #76b9ed 90%, transparent 90%) 2;
    border-width: 0 0 2px;
    border-style: solid;
}
.apps .current {
    background-color: #505357;
}
.ae {
    width: 18px;
    height: 17px;
    line-height: 16px;
    border-radius: 3px;
    background-color: #00005b;
    color: #9999ff;
    font-weight: bold;
    font-size: 9px;
}
.tray {
    margin-left: auto;
    display: flex;
    align-items: center;
    gap: 7px;
    padding-right: 15px;
}
.tray svg {
    width: 12px;
    height: 12px;
}
.weather {
    gap: 5px;
    margin-right: 10px;
}
.weather svg {
    width: 18px;
    height: 18px;
}
.pen {
    margin-left: 2px;
}
.clock {
    display: flex;
    flex-direction: column;
    align-items: center;
    font-size: 8px;
    line-height: 13px;
    margin: 0 6px 0 3px;
}
.notes {
    position: relative;
}
.notes svg {
    width: 14px;
    height: 14px;
}
.badge {
    position: absolute;
    right: -5px;
    bottom: -5px;
    width: 11px;
    height: 11px;
    line-height: 9px;
    border: 1px solid #999;
    border-radius: 50%;
    background-color: #333;
    font-size: 8px;
}
```
FILE: script.js
```js
const svg = document.getElementById("node-canvas");
// the canvas starts below the window header bars
const TOP = 77;
const colors = {
    green: "#1d7358", blue: "#246283", purple: "#3c3c83", red: "#83314a", orange: "#79461d", dark: "#1c1c1c"
};
const wires = {
    geo: ["#00aa82", 2], vec: ["#5a5ab4", 1.6], val: ["#9a9a9a", 1.5],
    thinVec: ["#44427a", 1], thinVal: ["#6a6a6a", 1], thinBool: ["#3f5142", 1]
};

function rect(x, y, w, h, fill, rx) {
    return `<rect x="${x}" y="${y}" width="${w}" height="${h}" fill="${fill}" rx="${rx || 0}"/>`;
}

// rows: o output, i input, f field, s dropdown, b toggle pair, c checkbox, - gap
function node(x, y, w, h, color, rows) {
    let out = rect(x - 1, y - 1, w + 2, h + 3, "#131313", 2);
    out += rect(x, y, w, h, "#303030", 1) + rect(x, y, w, 3, colors[color], 1);
    out += rect(x + 4, y + 1, 7, 1, "#8fb0a6");
    const step = (h - 4) / rows.length;
    [...rows].forEach((r, i) => {
        const cy = y + 4 + step * (i + 0.5);
        if (r === "o") out += rect(x + w - 6, cy - 0.5, 5, 1, "#b0b0b0");
        if (r === "i") out += rect(x + 1.5, cy - 0.5, 5, 1, "#b0b0b0");
        if (r === "f") out += rect(x + 1.5, cy - 1.3, w - 3, 2.6, "#545454", 0.5) + rect(x + 4, cy - 0.5, 5, 1, "#909090") + rect(x + w - 6, cy - 0.5, 3, 1, "#a0a0a0");
        if (r === "s") out += rect(x + 1.5, cy - 1.3, w - 3, 2.6, "#242424") + rect(x + 2, cy - 0.5, 4, 1, "#a8a8a8");
        if (r === "b") out += rect(x + 2, cy - 1.3, w / 2 - 2, 2.6, "#4772b3") + rect(x + w / 2, cy - 1.3, w / 2 - 2, 2.6, "#545454") + rect(x + 4, cy - 0.5, 4, 1, "#c0c8d8") + rect(x + w - 8, cy - 0.5, 4, 1, "#909090");
        if (r === "c") out += rect(x + 2, cy - 1, 2, 2, "#545454") + rect(x + 6, cy - 0.5, 5, 1, "#a0a0a0");
    });
    return out;
}

function wire(x1, y1, x2, y2, type) {
    const [stroke, width] = wires[type || "geo"];
    const dx = Math.abs(x2 - x1);
    const slope = Math.abs(y2 - y1) / dx;
    // flat links bend less than steep ones
    const d = dx * 0.5 * Math.min(1, slope * 2 + 0.25);
    return `<path d="M${x1} ${y1}C${x1 + d} ${y1} ${x2 - d} ${y2} ${x2} ${y2}" fill="none" stroke="${stroke}" stroke-width="${width}"/>`;
}

function strand(x, y) {
    const n = (dx, dy, w, h, c, r) => node(x + dx, y + dy, w, h, c, r);
    const l = (a, b, c, d, t) => wire(x + a, y + b, x + c, y + d, t);
    return n(40, 27, 22, 47, "green", "oooo-sbciiif") + n(40, 79, 22, 47, "green", "oooo-sbciiif") +
        n(6, 78, 22, 12, "red", "of") + n(78, 58, 22, 20, "green", "obii") +
        n(121, 29, 22, 27, "green", "oosiif") + n(157, 38, 22, 25, "blue", "oscif") +
        n(187, 35, 22, 18, "blue", "offi") + n(217, 26, 22, 31, "purple", "osiifff") +
        n(260, 6, 22, 22, "green", "oiiii") +
        l(64, 36, 77, 72, "vec") + l(64, 88, 77, 75, "vec") +
        l(30, 83, 40, 68, "val") + l(30, 83, 40, 120, "val") + l(101, 63, 120, 47) + l(144, 35, 259, 15) +
        l(144, 39, 156, 57, "thinBool") + l(179, 43, 187, 52, "thinVal") +
        l(210, 40, 216, 42, "thinVec") + l(239, 32, 259, 26, "thinVec");
}

const frames = [[381, 187], [367, 344], [373, 496], [383, 645]];
let dots = "";
for (let i = 0; i < 5; i++) {
    for (let j = 0; j < 5; j++) {
        dots += rect(i * 16.6, j * 16.6, 1.6, 1.6, i || j ? "#252525" : "#303030");
    }
}
let html = `<defs><pattern id="dots" width="83" height="83" x="5" y="53" patternUnits="userSpaceOnUse">${dots}</pattern></defs>`;
html += rect(0, 0, "100%", "100%", "url(#dots)");
html += `<g transform="translate(0 ${-TOP})">`;
frames.forEach(([x, y]) => html += rect(x, y, 288, 132, "#0f0f0f", 2));

const links = [
    [118, 300, 425, 159], [118, 300, 421, 248], [118, 300, 196, 338], [118, 300, 221, 580],
    [221, 334, 425, 159], [221, 334, 421, 300], [220, 334, 220, 594],
    [221, 580, 407, 405], [221, 580, 413, 557], [221, 580, 423, 705],
    [221, 594, 407, 457], [221, 594, 413, 609], [221, 594, 423, 757],
    [450, 155, 673, 155], [673, 155, 702, 333], [665, 198, 702, 333], [727, 331, 751, 457],
    [651, 355, 751, 457], [776, 454, 766, 592], [657, 507, 766, 592], [791, 588, 814, 654],
    [667, 655, 814, 654], [839, 650, 938, 655], [883, 673, 938, 659], [962, 651, 978, 665],
    [1008, 649, 1124, 635], [1149, 631, 1229, 733], [1253, 729, 1318, 864],
    [1290, 873, 1318, 872], [1343, 860, 1374, 859], [1398, 855, 1417, 857], [1441, 854, 1504, 861],
    [1046, 658, 1089, 668, "thinVec"], [1039, 674, 1045, 682, "thinVal"], [1069, 672, 1089, 672, "thinVec"],
    [1113, 659, 1124, 643, "thinVec"], [1100, 770, 1111, 782, "thinVec"], [1101, 783, 1111, 786, "vec"],
    [1134, 773, 1156, 759, "thinVal"], [1180, 742, 1198, 782, "thinVal"], [1180, 787, 1198, 778, "thinVec"],
    [1223, 768, 1229, 744, "thinVec"], [1291, 900, 1319, 896, "thinVec"]
];
const nodes = [
    [94, 295, 22, 30, "green", "offfffc"], [197, 328, 22, 53, "green", "oiifffifffifff"],
    [212, 203, 24, 12, "dark", "oo"], [427, 150, 22, 12, "green", "oi"],
    [703, 325, 22, 12, "green", "oi"], [753, 448, 22, 12, "green", "oi"],
    [767, 582, 22, 12, "green", "oi"], [816, 645, 22, 11, "green", "oi"],
    [859, 668, 22, 20, "green", "obff"], [939, 645, 22, 20, "green", "oiic"],
    [979, 643, 28, 42, "green", "ooo-s-iiffbf"], [1022, 653, 22, 8, "red", "o"],
    [1015, 669, 22, 34, "orange", "oosiffff"], [1046, 667, 22, 30, "purple", "osiifff"],
    [1090, 653, 22, 21, "purple", "osii"], [1125, 626, 22, 32, "green", "oiiiifff"],
    [1230, 724, 22, 22, "green", "oiiii"], [1076, 764, 22, 8, "red", "o"],
    [1077, 778, 22, 31, "red", "oooobsc"], [1111, 768, 22, 20, "purple", "o-sii"],
    [1157, 736, 22, 40, "blue", "osscifff"], [1157, 781, 22, 48, "blue", "osifffifffif"],
    [1199, 763, 22, 21, "purple", "osii"], [1319, 855, 22, 43, "green", "oiiiciifffi"],
    [1267, 868, 22, 22, "green", "oofff"], [1268, 895, 22, 28, "blue", "osffif"],
    [1375, 850, 22, 18, "green", "oiic"], [1418, 848, 22, 18, "green", "oiis"],
    [1505, 855, 22, 11, "dark", "ii"]
];
links.forEach(l => html += wire(...l));
nodes.forEach(n => html += node(...n));
frames.forEach(([x, y]) => html += strand(x, y));
svg.innerHTML = html + "</g>";

// timeline ruler
const ruler = document.getElementById("ruler");
const grid = document.getElementById("grid");
for (let f = 0; f <= 250; f += 10) {
    ruler.innerHTML += `<span>${f}</span>`;
    grid.innerHTML += "<span></span>";
}

// outliner: level, name, icon, arrow, extra icons, has checkbox
const items = [
    [0, "Scene Collection", "collection", "", ""],
    [1, "Collection", "collection", "down", "", true],
    [2, "Area", "bulb", "right", "area:green"],
    [2, "doubleHelix", "meshobj", "right", "wrench:azure mesh:green"],
    [2, "Empty", "empty", "right", "anim:dim"],
    [2, "Light", "bulb", "right", "sun:green"],
    [1, "CAM-COLLECTION", "collection", "down", "", true],
    [2, "C_RIG", "empty", "right", "anim:dim empty:orange"],
    [2, "depth", "empty", "none", ""],
    [2, "GENCAM", "camera", "right", "constraint:azure camdata:green"]
];
const use = (id, cls) => `<svg class="${cls}"><use href="#${id}"/></svg>`;
const list = document.getElementById("outliner-rows");
items.forEach(([level, name, icon, arrow, extras, check]) => {
    const tri = arrow === "none" ? '<span class="tri"></span>' : arrow ? use("tri-" + arrow, "tri") : "";
    const more = extras.split(" ").filter(Boolean).map(e => {
        const [id, cls] = e.split(":");
        return use(id, `icon ${cls} ${id === "camdata" ? "camdata" : ""}`);
    }).join("");
    const count = name === "C_RIG" ? '<span class="count">6</span>' : "";
    const box = check ? `<input type="checkbox" checked aria-label="Include ${name}">` : "";
    const toggles = level ? `<span class="toggles">${box}${use("eye", "icon")}${use("photo", "icon")}</span>` : "";
    list.innerHTML += `<li class="row level-${level} ${name === "doubleHelix" ? "selected" : ""}">${tri}${use(icon, level === 2 ? "icon obj-icon" : "icon")}<span>${name}</span><span class="extras">${more}${count}</span>${toggles}</li>`;
});
for (let i = 0; i < 8; i++) {
    list.innerHTML += '<li class="row"></li>';
}
```
